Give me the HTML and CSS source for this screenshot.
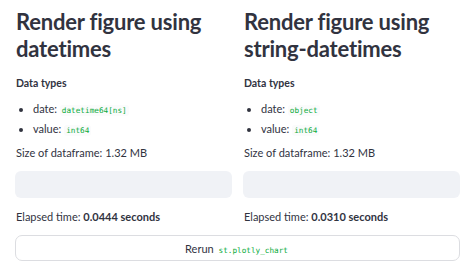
FILE: index.html
```html
<!DOCTYPE html>
<html>
<head>
<meta charset="utf-8">
<link rel="stylesheet" href="styles.css">
</head>
<body>
<div class="page">
  <div class="cols">
    <div class="col">
      <h1 class="title">Render figure using datetimes</h1>
      <p class="label">Data types</p>
      <ul class="types">
        <li>date: <code>datetime64[ns]</code></li>
        <li>value: <code>int64</code></li>
      </ul>
      <p class="text">Size of dataframe: 1.32 MB</p>
      <div class="chart"></div>
      <p class="text">Elapsed time: <b>0.0444 seconds</b></p>
    </div>
    <div class="col">
      <h1 class="title">Render figure using string-datetimes</h1>
      <p class="label">Data types</p>
      <ul class="types">
        <li>date: <code>object</code></li>
        <li>value: <code>int64</code></li>
      </ul>
      <p class="text">Size of dataframe: 1.32 MB</p>
      <div class="chart"></div>
      <p class="text">Elapsed time: <b>0.0310 seconds</b></p>
    </div>
  </div>
  <button class="rerun">Rerun <code>st.plotly_chart</code></button>
</div>
</body>
</html>
```
FILE: styles.css
```css
html, body {
  margin: 0;
  padding: 0;
  background: #ffffff;
}
body {
  font-family: Lato, "Noto Sans", sans-serif;
  color: #31333f;
}
.page {
  padding: 8px 14px 0 15px;
}
.cols {
  display: grid;
  grid-template-columns: 1fr 1fr;
  column-gap: 11px;
}
.col {
  display: flex;
  flex-direction: column;
}
.title {
  margin: 0 0 0 1px;
  font-size: 22px;
  line-height: 27px;
  font-weight: 700;
  letter-spacing: -0.2px;
}
.label {
  margin: 14px 0 0 1px;
  font-size: 10.5px;
  line-height: 14px;
  font-weight: 700;
}
.types {
  margin: 10px 0 0 0;
  padding: 0 0 0 18px;
  font-size: 11px;
  line-height: 18px;
}
code {
  font-family: "DejaVu Sans Mono", monospace;
  font-size: 7.7px;
  color: #09ab3b;
  background: #fbfbfc;
  padding: 1px 2px;
  border-radius: 3px;
}
.text {
  margin: 5px 0 0 1px;
  font-size: 11px;
  line-height: 15px;
}
.text b {
  font-weight: 700;
}
.chart {
  margin-top: 11px;
  height: 27px;
  background: #f0f2f6;
  border-radius: 6px;
}
.chart + .text {
  margin-top: 11px;
}
.rerun {
  display: block;
  width: 100%;
  margin-top: 11px;
  height: 26px;
  background: #ffffff;
  border: 1px solid #dcdde1;
  border-radius: 7px;
  font-family: Lato, "Noto Sans", sans-serif;
  font-size: 11px;
  color: #31333f;
  cursor: pointer;
}
.rerun code {
  background: transparent;
}
```
